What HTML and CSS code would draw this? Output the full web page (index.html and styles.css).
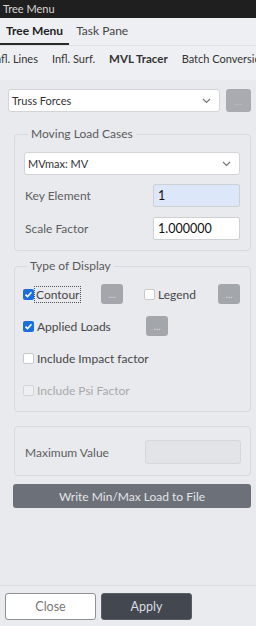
FILE: index.html
```html
<!DOCTYPE html>
<html lang="en">
<head>
    <meta charset="UTF-8">
    <title>Tree Menu</title>
    <link rel="stylesheet" href="styles.css">
</head>
<body>
    <div class="titlebar">Tree Menu</div>

    <div class="tabs tabs-top">
        <span class="tab active">Tree Menu</span>
        <span class="tab">Task Pane</span>
    </div>

    <div class="tabs tabs-sub">
        <div class="strip">
            <span class="tab">Infl. Lines</span>
            <span class="tab">Infl. Surf.</span>
            <span class="tab active">MVL Tracer</span>
            <span class="tab">Batch Conversion</span>
        </div>
    </div>

    <div class="panel">
        <div class="top-row">
            <div class="select wide">
                <span>Truss Forces</span>
                <svg class="chev" width="9" height="6" viewBox="0 0 9 6"><path d="M1 1l3.5 3.5L8 1" fill="none" stroke="#777" stroke-width="1.2"/></svg>
            </div>
            <button class="dots off">...</button>
        </div>

        <fieldset class="group">
            <legend>Moving Load Cases</legend>
            <div class="select">
                <span>MVmax: MV</span>
                <svg class="chev" width="9" height="6" viewBox="0 0 9 6"><path d="M1 1l3.5 3.5L8 1" fill="none" stroke="#777" stroke-width="1.2"/></svg>
            </div>
            <div class="field">
                <label>Key Element</label>
                <div class="input focus">1</div>
            </div>
            <div class="field">
                <label>Scale Factor</label>
                <div class="input">1.000000</div>
            </div>
        </fieldset>

        <fieldset class="group display">
            <legend>Type of Display</legend>
            <div class="opt-row">
                <div class="check on"><span class="box"></span><span class="focus-text">Contour</span></div>
                <button class="dots">...</button>
                <div class="check"><span class="box"></span><span>Legend</span></div>
                <button class="dots">...</button>
            </div>
            <div class="opt-row second">
                <div class="check on"><span class="box"></span><span>Applied Loads</span></div>
                <button class="dots">...</button>
            </div>
            <div class="check single"><span class="box"></span><span>Include Impact factor</span></div>
            <div class="check single disabled"><span class="box"></span><span>Include Psi Factor</span></div>
        </fieldset>

        <div class="group plain">
            <div class="field">
                <label>Maximum Value</label>
                <div class="input off"></div>
            </div>
        </div>

        <button class="write">Write Min/Max Load to File</button>
    </div>

    <div class="footer">
        <button class="btn close">Close</button>
        <button class="btn apply">Apply</button>
    </div>
</body>
</html>
```

FILE: styles.css
```css
* {
    box-sizing: border-box;
}
html, body {
    height: 100%;
}
body {
    margin: 0;
    display: flex;
    flex-direction: column;
    font-family: Lato, "Noto Sans", sans-serif;
    background-color: #e9eaee;
    color: #333;
    overflow: hidden;
}
.titlebar {
    height: 18px;
    line-height: 18px;
    padding-left: 3px;
    background-color: #1f1f1f;
    color: #d6d6d6;
    font-size: 11px;
}
.tabs {
    display: flex;
    background-color: #eeeff2;
    white-space: nowrap;
    overflow: hidden;
}
.tabs-top {
    height: 28px;
    border-bottom: 1px solid #dfe0e4;
}
.tabs-top .tab {
    padding: 0 6px;
    line-height: 25px;
    height: 27px;
    font-size: 12px;
    color: #444;
    border-bottom: 2px solid transparent;
    margin-right: 1px;
}
.tab.active {
    font-weight: bold;
    color: #1e1e1e;
    border-bottom-color: #2a2a2a;
}
.tabs-sub {
    height: 34px;
}
.strip {
    display: flex;
    margin-left: -15px;
}
.tabs-sub .tab {
    padding: 0 7px;
    line-height: 22px;
    margin-top: 2px;
    height: 25px;
    font-size: 11px;
    color: #333;
    border-bottom: 2px solid transparent;
}
.tabs-sub .tab.active {
    font-size: 11.5px;
}
.panel {
    flex: 1;
    padding: 9px 5px 0 8px;
}
.top-row {
    display: flex;
    gap: 6px;
}
.select {
    height: 23px;
    display: flex;
    align-items: center;
    justify-content: space-between;
    padding: 0 8px 0 3px;
    background-color: #fff;
    border: 1px solid #d3d4d8;
    border-radius: 3px;
    font-size: 11px;
    color: #333;
}
.select.wide {
    flex: 1;
}
.dots {
    width: 22px;
    height: 20px;
    padding: 0;
    border: none;
    border-radius: 3px;
    background-color: #a3a6ab;
    color: #d8d9dc;
    font-size: 10px;
    line-height: 14px;
    font-family: inherit;
}
.dots.off {
    width: 25px;
    height: 23px;
    background-color: #a9abb0;
    color: #c0c2c6;
}
.group {
    margin: 14px 0 0 6px;
    padding: 10px 10px 10px 9px;
    border: 1px solid #d8d9dd;
    border-radius: 4px;
}
.group legend {
    padding: 0 3px;
    margin-left: 4px;
    font-size: 12px;
    color: #5a5a5a;
    line-height: 16px;
}
.field {
    display: flex;
    align-items: center;
    justify-content: space-between;
    margin-top: 9px;
    font-size: 12px;
    color: #5e5e5e;
}
.field + .field {
    margin-top: 10px;
}
.field label {
    padding-left: 1px;
}
.input {
    width: 87px;
    height: 23px;
    line-height: 21px;
    padding-left: 4px;
    background-color: #fff;
    border: 1px solid #cfd0d4;
    border-radius: 2px;
    color: #111;
    font-size: 12.5px;
}
.input.focus {
    background-color: #dce8fa;
}
.display {
    margin-top: 7px;
    padding: 0 10px 13px 8px;
}
.opt-row {
    display: flex;
    align-items: center;
    height: 20px;
    margin-top: 10px;
}
.opt-row.second {
    margin-top: 12px;
}
.check {
    display: flex;
    align-items: center;
    height: 16px;
    font-size: 12px;
    color: #474747;
}
.check .box {
    width: 11px;
    height: 11px;
    margin-right: 3px;
    border: 1px solid #c8c9cc;
    border-radius: 2px;
    background-color: #fff;
}
.check.on .box {
    border: none;
    background: #1a6fe0 url("data:image/svg+xml,%3Csvg xmlns='http://www.w3.org/2000/svg' viewBox='0 0 11 11'%3E%3Cpath d='M2.5 5.6l2 2 4-4.3' fill='none' stroke='white' stroke-width='1.6'/%3E%3C/svg%3E") no-repeat center;
}
.focus-text {
    outline: 1px dotted #555;
    padding: 0 1px;
    margin-left: -2px;
}
.opt-row .check:first-child {
    width: 78px;
}
.opt-row .check:nth-child(3) {
    width: 74px;
    margin-left: 21px;
}
.opt-row.second .check {
    width: 123px;
}
.check.single {
    margin-top: 14px;
}
.check.single.disabled {
    margin-top: 16px;
}
.check.disabled {
    color: #a9a9a9;
}
.check.disabled .box {
    background-color: #eeeff2;
    border-color: #d4d5d8;
}
.group.plain {
    margin-top: 14px;
    padding: 4px 9px 11px 9px;
}
.input.off {
    width: 96px;
    height: 24px;
    background-color: #e3e4e8;
    border-color: #d6d7db;
    border-radius: 3px;
}
.write {
    display: block;
    width: calc(100% - 5px);
    margin: 8px 0 0 5px;
    height: 24px;
    border: none;
    border-radius: 3px;
    background-color: #6b7079;
    color: #e3e4e6;
    font-family: inherit;
    font-size: 12px;
}
.footer {
    height: 41px;
    display: flex;
    gap: 5px;
    padding: 7px 0 0 5px;
    border-top: 1px solid #dcdde1;
    background-color: #eaebef;
}
.btn {
    width: 91px;
    height: 27px;
    border-radius: 3px;
    font-family: inherit;
    font-size: 12.5px;
}
.close {
    background-color: #fff;
    border: 1px solid #8e9096;
    color: #777;
}
.apply {
    background-color: #434850;
    border: 1px solid #595d64;
    color: #dcdde0;
}
```
